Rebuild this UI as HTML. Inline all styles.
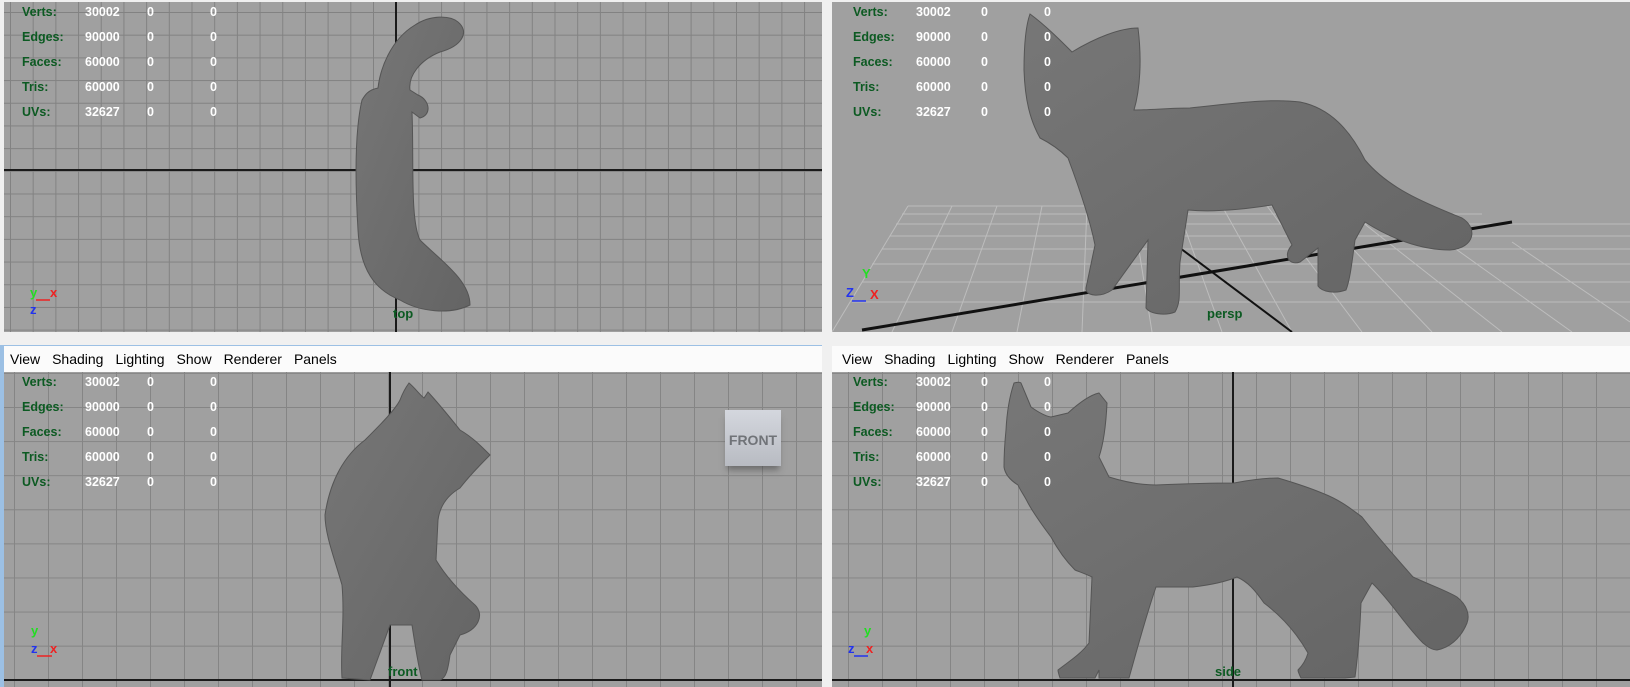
<!DOCTYPE html>
<html><head><meta charset="utf-8"><style>
*{margin:0;padding:0;box-sizing:border-box}
body{width:1630px;height:687px;background:#f0f0f0;position:relative;overflow:hidden;font-family:"Liberation Sans",sans-serif}
.vp{position:absolute;background-color:#a0a0a0;overflow:hidden}
.menu{position:absolute;height:26px;background:#fbfbfb;font-size:14px;color:#000;line-height:26px}
.menu span{margin-right:12px}
.st{position:absolute;font-size:12.5px;font-weight:bold;line-height:25px}
.st div{position:relative;height:25px}
.st b{position:absolute;top:0}
.l{color:#0c5a22}.n{color:#fff}
.ax{position:absolute;background:#1a1a1a}
.lbl{position:absolute;color:#0c5a22;font-weight:bold;font-size:13px}
</style></head><body>

<div class="vp" style="left:4px;top:2px;width:818px;height:330px;background-image:linear-gradient(#828282 1px,transparent 1px),linear-gradient(90deg,#828282 1px,transparent 1px);background-size:22.7px 22.7px;background-position:6px 10px"></div>
<div class="ax" style="left:4px;top:169px;width:818px;height:2px"></div>
<div class="ax" style="left:395px;top:2px;width:2px;height:330px"></div>

<div class="vp" style="left:832px;top:2px;width:798px;height:330px"></div>
<svg style="position:absolute;left:832px;top:2px" width="798" height="330">
<g stroke="#bdbdbd" stroke-width="1" fill="none">
<path d="M20,300 L798,300 M30,280 L798,280 M40,262 L798,262 M50,247 L798,247 M58,234 L798,234 M64,222 L798,222 M70,212 L650,212 M76,204 L500,204"/>
<path d="M0,330 L76,204 M60,330 L120,204 M120,330 L165,204 M185,330 L210,204 M250,330 L255,204 M320,330 L300,204 M390,330 L345,204 M460,330 L390,204 M530,330 L435,204 M600,330 L480,204 M670,330 L530,220 M740,330 L600,230 M798,320 L680,240"/>
</g>
<path d="M30,328 L680,220" stroke="#111" stroke-width="3"/>
<path d="M340,240 L460,330" stroke="#111" stroke-width="2"/>
</svg>

<div style="position:absolute;left:0;top:345px;width:822px;height:3px;background:#9cc0e4"></div>
<div style="position:absolute;left:0;top:345px;width:4px;height:342px;background:#9cc0e4"></div>
<div class="menu" style="left:4px;top:346px;width:818px;padding-left:6px"><span>View</span><span>Shading</span><span>Lighting</span><span>Show</span><span>Renderer</span><span>Panels</span></div>
<div class="vp" style="left:4px;top:372px;width:818px;height:315px;background-image:linear-gradient(#858585 1px,transparent 1px),linear-gradient(90deg,#858585 1px,transparent 1px);background-size:34px 34.1px;background-position:10px 35px"></div>
<div class="ax" style="left:4px;top:679px;width:818px;height:2px"></div>
<div class="ax" style="left:389px;top:372px;width:2px;height:315px"></div>
<div style="position:absolute;left:725px;top:410px;width:56px;height:56px;background:linear-gradient(#d4d7de,#b8bbc2);box-shadow:0 6px 6px -2px rgba(60,60,60,.5)"></div>
<div style="position:absolute;left:725px;top:432px;width:56px;text-align:center;font-weight:bold;font-size:14px;color:#707378">FRONT</div>

<div class="menu" style="left:832px;top:346px;width:798px;padding-left:10px"><span>View</span><span>Shading</span><span>Lighting</span><span>Show</span><span>Renderer</span><span>Panels</span></div>
<div class="vp" style="left:832px;top:372px;width:798px;height:315px;background-image:linear-gradient(#858585 1px,transparent 1px),linear-gradient(90deg,#858585 1px,transparent 1px);background-size:34px 34.1px;background-position:16px 35px"></div>
<div class="ax" style="left:832px;top:679px;width:798px;height:2px"></div>
<div class="ax" style="left:1232px;top:372px;width:2px;height:315px"></div>

<svg style="position:absolute;left:0;top:0" width="1630" height="687">
<defs><linearGradient id="f" x1="0" y1="0" x2="1" y2="1"><stop offset="0" stop-color="#777"/><stop offset="1" stop-color="#646464"/></linearGradient></defs>
<g fill="url(#f)" stroke="#555" stroke-width="1">
<path d="M458,22 C470,32 462,46 440,52 C420,60 408,76 410,90 L418,95 C430,100 432,115 420,118 L412,112 C414,160 410,220 420,240 C440,260 470,280 470,305 C450,315 420,312 400,300 C375,290 360,270 358,230 C355,180 355,130 362,100 C365,95 368,90 378,88 C380,70 390,40 415,25 C430,15 450,15 458,22 Z"/>
<path d="M1030,14 C1045,25 1060,40 1072,52 C1095,38 1120,28 1138,28 C1142,60 1140,90 1134,110 C1150,110 1170,108 1190,108 C1230,104 1270,98 1300,102 C1330,108 1350,130 1365,160 C1390,190 1430,205 1462,218 C1478,228 1475,248 1450,250 C1420,250 1390,238 1365,222 L1355,240 C1352,262 1350,280 1346,290 C1335,294 1322,292 1318,286 L1318,248 L1300,262 C1290,266 1282,256 1292,245 L1272,205 C1240,210 1210,212 1188,210 L1180,262 C1178,290 1182,300 1175,312 C1165,316 1150,314 1146,308 L1148,240 L1112,290 C1100,298 1085,296 1086,288 L1095,245 C1090,220 1080,190 1068,158 C1058,148 1048,142 1040,138 C1030,120 1025,100 1024,70 C1024,45 1026,25 1030,14 Z"/>
<path d="M1014,383 C1018,382 1020,382 1021,383 L1031,407 C1038,412 1045,416 1051,417 L1068,413 C1080,402 1090,395 1099,393 L1107,403 C1106,425 1103,445 1099,457 L1109,477 C1125,482 1140,485 1156,485 C1180,484 1210,483 1234,483 C1250,480 1265,478 1278,478 C1295,483 1310,488 1322,493 C1340,500 1350,508 1362,517 C1380,540 1400,562 1413,577 C1430,585 1445,590 1457,597 C1467,605 1470,615 1467,623 C1460,640 1448,648 1437,650 C1432,650 1428,647 1423,643 C1405,625 1390,600 1372,583 L1361,603 C1360,630 1358,655 1355,677 L1345,678 L1339,678 L1301,678 C1298,672 1298,670 1298,670 C1303,665 1306,660 1308,653 C1295,630 1280,615 1264,603 C1255,590 1248,582 1237,577 C1225,582 1210,585 1193,587 L1156,587 C1148,610 1142,632 1136,653 L1129,678 L1099,678 L1099,670 L1095,678 L1060,678 C1058,672 1058,670 1058,670 C1068,662 1080,655 1089,643 L1092,577 C1086,574 1080,572 1075,570 C1065,560 1058,550 1051,537 C1042,525 1034,514 1028,503 C1024,495 1020,490 1018,485 C1010,480 1005,474 1004,467 C1004,450 1005,440 1006,430 C1007,410 1010,395 1014,383 Z"/>
<path d="M409,383 C415,388 420,395 424,398 L428,392 C440,405 452,420 460,430 C472,437 480,445 490,455 C480,465 470,475 460,488 C448,495 440,505 438,520 L436,560 C445,575 458,590 475,605 C485,615 478,630 460,635 L450,655 C448,670 446,678 440,680 L422,680 C418,665 415,645 412,625 L390,625 L370,680 L342,678 C340,650 345,620 342,585 C335,560 325,535 325,515 C330,480 345,455 365,440 C380,425 395,410 400,400 C403,392 406,387 409,383 Z"/>
</g>
</svg>

<div class="st" style="left:22px;top:0">
<div><b class="l">Verts:</b><b class="n" style="left:63px">30002</b><b class="n" style="left:125px">0</b><b class="n" style="left:188px">0</b></div>
<div><b class="l">Edges:</b><b class="n" style="left:63px">90000</b><b class="n" style="left:125px">0</b><b class="n" style="left:188px">0</b></div>
<div><b class="l">Faces:</b><b class="n" style="left:63px">60000</b><b class="n" style="left:125px">0</b><b class="n" style="left:188px">0</b></div>
<div><b class="l">Tris:</b><b class="n" style="left:63px">60000</b><b class="n" style="left:125px">0</b><b class="n" style="left:188px">0</b></div>
<div><b class="l">UVs:</b><b class="n" style="left:63px">32627</b><b class="n" style="left:125px">0</b><b class="n" style="left:188px">0</b></div>
</div>
<div class="st" style="left:853px;top:0">
<div><b class="l">Verts:</b><b class="n" style="left:63px">30002</b><b class="n" style="left:128px">0</b><b class="n" style="left:191px">0</b></div>
<div><b class="l">Edges:</b><b class="n" style="left:63px">90000</b><b class="n" style="left:128px">0</b><b class="n" style="left:191px">0</b></div>
<div><b class="l">Faces:</b><b class="n" style="left:63px">60000</b><b class="n" style="left:128px">0</b><b class="n" style="left:191px">0</b></div>
<div><b class="l">Tris:</b><b class="n" style="left:63px">60000</b><b class="n" style="left:128px">0</b><b class="n" style="left:191px">0</b></div>
<div><b class="l">UVs:</b><b class="n" style="left:63px">32627</b><b class="n" style="left:128px">0</b><b class="n" style="left:191px">0</b></div>
</div>
<div class="st" style="left:22px;top:370px">
<div><b class="l">Verts:</b><b class="n" style="left:63px">30002</b><b class="n" style="left:125px">0</b><b class="n" style="left:188px">0</b></div>
<div><b class="l">Edges:</b><b class="n" style="left:63px">90000</b><b class="n" style="left:125px">0</b><b class="n" style="left:188px">0</b></div>
<div><b class="l">Faces:</b><b class="n" style="left:63px">60000</b><b class="n" style="left:125px">0</b><b class="n" style="left:188px">0</b></div>
<div><b class="l">Tris:</b><b class="n" style="left:63px">60000</b><b class="n" style="left:125px">0</b><b class="n" style="left:188px">0</b></div>
<div><b class="l">UVs:</b><b class="n" style="left:63px">32627</b><b class="n" style="left:125px">0</b><b class="n" style="left:188px">0</b></div>
</div>
<div class="st" style="left:853px;top:370px">
<div><b class="l">Verts:</b><b class="n" style="left:63px">30002</b><b class="n" style="left:128px">0</b><b class="n" style="left:191px">0</b></div>
<div><b class="l">Edges:</b><b class="n" style="left:63px">90000</b><b class="n" style="left:128px">0</b><b class="n" style="left:191px">0</b></div>
<div><b class="l">Faces:</b><b class="n" style="left:63px">60000</b><b class="n" style="left:128px">0</b><b class="n" style="left:191px">0</b></div>
<div><b class="l">Tris:</b><b class="n" style="left:63px">60000</b><b class="n" style="left:128px">0</b><b class="n" style="left:191px">0</b></div>
<div><b class="l">UVs:</b><b class="n" style="left:63px">32627</b><b class="n" style="left:128px">0</b><b class="n" style="left:191px">0</b></div>
</div>

<div class="lbl" style="left:393px;top:306px">top</div>
<div class="lbl" style="left:1207px;top:306px">persp</div>
<div class="lbl" style="left:388px;top:664px">front</div>
<div class="lbl" style="left:1215px;top:664px">side</div>

<svg style="position:absolute;left:0;top:0" width="1630" height="687" font-family="Liberation Sans" font-weight="bold" font-size="13">
<g><text x="30" y="297" fill="#22dd22">y</text><text x="50" y="297" fill="#ee2222">x</text><text x="30" y="314" fill="#2233ee">z</text><line x1="36" y1="300" x2="50" y2="300" stroke="#e22" stroke-width="1.5"/></g>
<g><text x="862" y="278" fill="#22dd22">Y</text><text x="846" y="297" fill="#2233ee">Z</text><text x="870" y="299" fill="#ee2222">X</text><line x1="852" y1="301" x2="866" y2="301" stroke="#23e" stroke-width="1.5"/></g>
<g><text x="31" y="635" fill="#22dd22">y</text><text x="31" y="653" fill="#2233ee">z</text><text x="50" y="653" fill="#ee2222">x</text><line x1="37" y1="656" x2="52" y2="656" stroke="#e22" stroke-width="1.5"/></g>
<g><text x="864" y="635" fill="#22dd22">y</text><text x="848" y="653" fill="#2233ee">z</text><text x="866" y="653" fill="#ee2222">x</text><line x1="854" y1="656" x2="868" y2="656" stroke="#23e" stroke-width="1.5"/></g>
</svg>
</body></html>
